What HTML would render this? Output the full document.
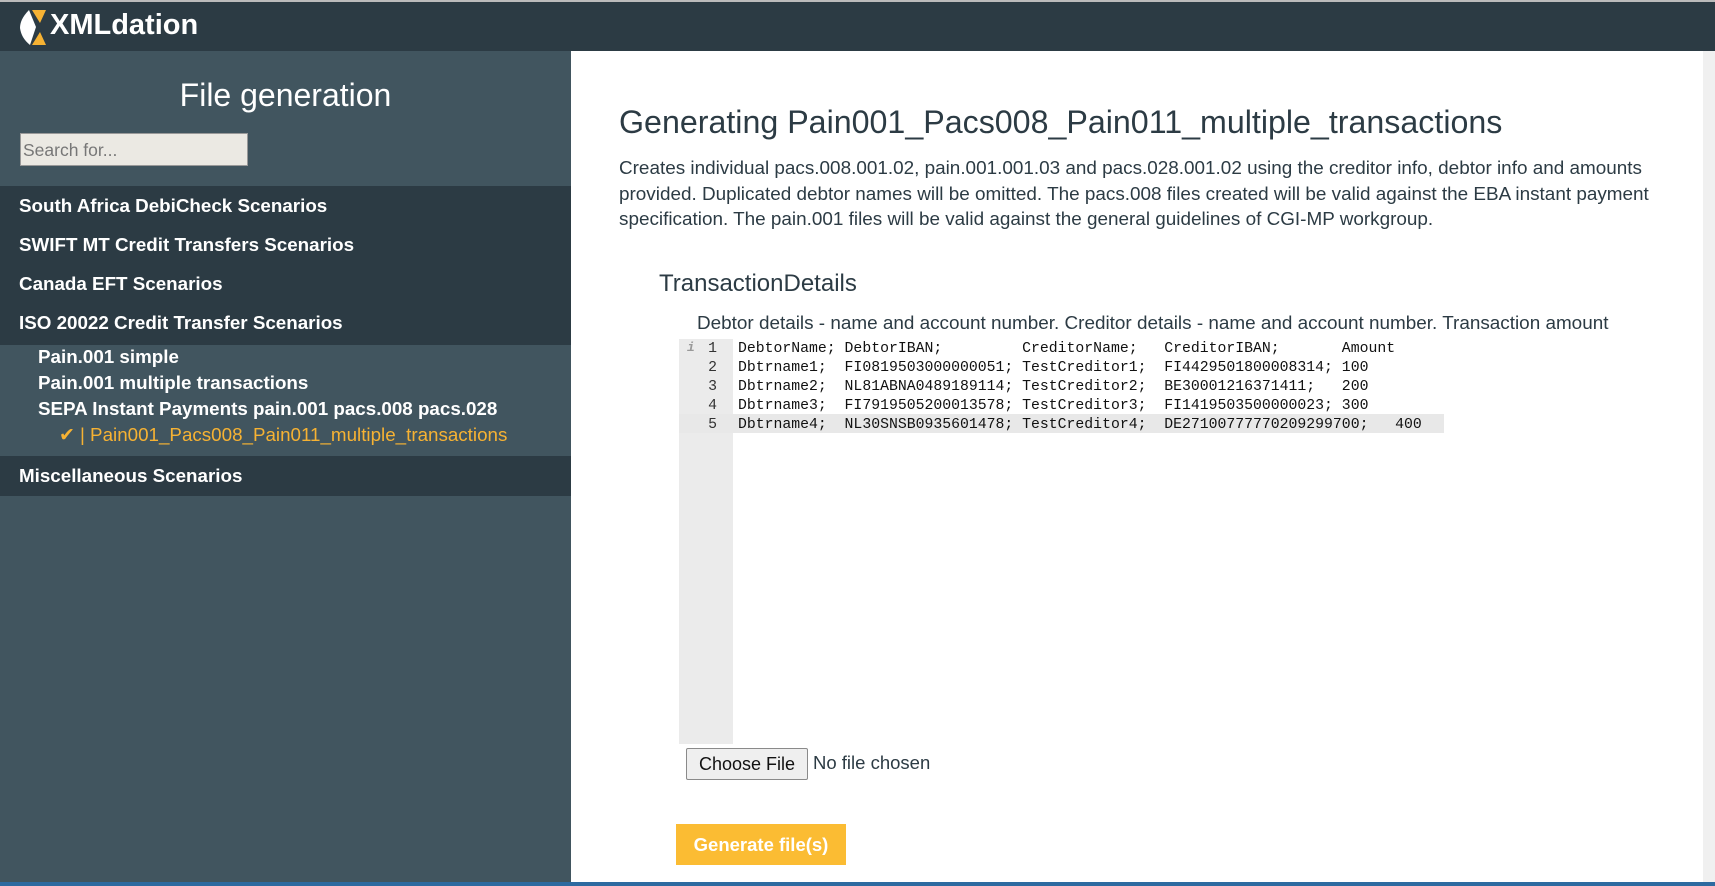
<!DOCTYPE html>
<html><head><meta charset="utf-8"><style>
*{margin:0;padding:0;box-sizing:border-box}
body{width:1715px;height:886px;overflow:hidden;background:#f0f0f0;font-family:"Liberation Sans",Arial,sans-serif;position:relative}
.abs{position:absolute}
#top{left:0;top:0;width:1715px;height:2px;background:#bbb}
#hdr{left:0;top:2px;width:1715px;height:49px;background:#2c3b44}
#side{left:0;top:51px;width:571px;height:831px;background:#41555f}
#main{left:571px;top:51px;width:1132px;height:831px;background:#fff}
#bot{left:0;top:882px;width:1715px;height:4px;background:#2d6aa0}
.cat{position:absolute;left:0;width:571px;height:39px;background:#2c3b44;color:#fff;font-weight:bold;font-size:18.8px;padding-left:19px;line-height:39px}
.sub{position:absolute;left:38px;color:#fff;font-weight:bold;font-size:18.8px}
.code{font-family:"Liberation Mono","DejaVu Sans Mono",monospace;font-size:14.8px;white-space:pre;color:#111}
</style></head><body>
<div id="top" class="abs"></div>
<div id="hdr" class="abs">
<svg class="abs" style="left:19px;top:7px" width="28" height="37" viewBox="0 0 28 37">
<path d="M10 1 C3 8 1 14 1 19 C2 26 5 31 11 36 L17 18 Z" fill="#fff"/>
<path d="M13 1 L27 1 L21 14 Z" fill="#f6b233"/>
<path d="M13 36 L27 36 L21 23 Z" fill="#f6b233"/>
</svg>
<div class="abs" style="left:50px;top:7px;color:#fff;font-size:29px;font-weight:bold;letter-spacing:0px">XMLdation</div>
</div>
<div id="side" class="abs">
<div class="abs" style="left:0;width:571px;top:26px;text-align:center;color:#fff;font-size:32px">File generation</div>
<div class="abs" style="left:20px;top:82px;width:228px;height:33px;background:#ebe9e3;border:1px solid #999;color:#777;font-size:17.5px;padding:6px 2px">Search for...</div>
<div class="cat" style="top:135px">South Africa DebiCheck Scenarios</div>
<div class="cat" style="top:174px">SWIFT MT Credit Transfers Scenarios</div>
<div class="cat" style="top:213px">Canada EFT Scenarios</div>
<div class="cat" style="top:252px;height:42px">ISO 20022 Credit Transfer Scenarios</div>
<div class="sub" style="top:295px">Pain.001 simple</div>
<div class="sub" style="top:321px">Pain.001 multiple transactions</div>
<div class="sub" style="top:347px">SEPA Instant Payments pain.001 pacs.008 pacs.028</div>
<div class="abs" style="left:59px;top:373px;color:#f6b233;font-size:18.8px">✔ | Pain001_Pacs008_Pain011_multiple_transactions</div>
<div class="cat" style="top:405px;height:40px;line-height:40px">Miscellaneous Scenarios</div>
</div>
<div id="main" class="abs">
<div class="abs" style="left:48px;top:53px;color:#2c3b44;font-size:32.2px">Generating Pain001_Pacs008_Pain011_multiple_transactions</div>
<div class="abs" style="left:48px;top:105px;width:1080px;color:#2c3b44;font-size:18.9px;line-height:25.5px">Creates individual pacs.008.001.02, pain.001.001.03 and pacs.028.001.02 using the creditor info, debtor info and amounts provided. Duplicated debtor names will be omitted. The pacs.008 files created will be valid against the EBA instant payment specification. The pain.001 files will be valid against the general guidelines of CGI-MP workgroup.</div>
<div class="abs" style="left:88px;top:219px;color:#2c3b44;font-size:24px">TransactionDetails</div>
<div class="abs" style="left:126px;top:262px;color:#2c3b44;font-size:18.9px">Debtor details - name and account number. Creditor details - name and account number. Transaction amount</div>
<div class="abs" style="left:108px;top:288px;width:54px;height:405px;background:#ebebeb"></div>
<div class="abs" style="left:108px;top:363px;width:765px;height:19px;background:#e8e8e8"></div>
<div class="abs code" style="left:116px;top:289px;color:#999;font-style:italic;font-weight:bold;font-size:13px">i</div>
<div class="abs code" style="left:126px;top:289px;line-height:19px;color:#333;text-align:right;width:20px">1
2
3
4
5</div>
<div class="abs code" style="left:167px;top:289px;line-height:19px">DebtorName; DebtorIBAN;         CreditorName;   CreditorIBAN;       Amount
Dbtrname1;  FI0819503000000051; TestCreditor1;  FI4429501800008314; 100
Dbtrname2;  NL81ABNA0489189114; TestCreditor2;  BE30001216371411;   200
Dbtrname3;  FI7919505200013578; TestCreditor3;  FI1419503500000023; 300
Dbtrname4;  NL30SNSB0935601478; TestCreditor4;  DE27100777770209299700;   400</div>
<div class="abs" style="left:115px;top:697px;width:122px;height:32px;background:#efefef;border:1px solid #8a8a8a;border-radius:2px;font-size:18px;color:#111;text-align:center;line-height:30px">Choose File</div>
<div class="abs" style="left:242px;top:701px;font-size:18.5px;color:#2c3b44">No file chosen</div>
<div class="abs" style="left:105px;top:773px;width:170px;height:41px;background:#fbbc33;color:#fff;font-weight:bold;font-size:18.5px;text-align:center;line-height:41px">Generate file(s)</div>
</div>
<div id="bot" class="abs"></div>
</body></html>
